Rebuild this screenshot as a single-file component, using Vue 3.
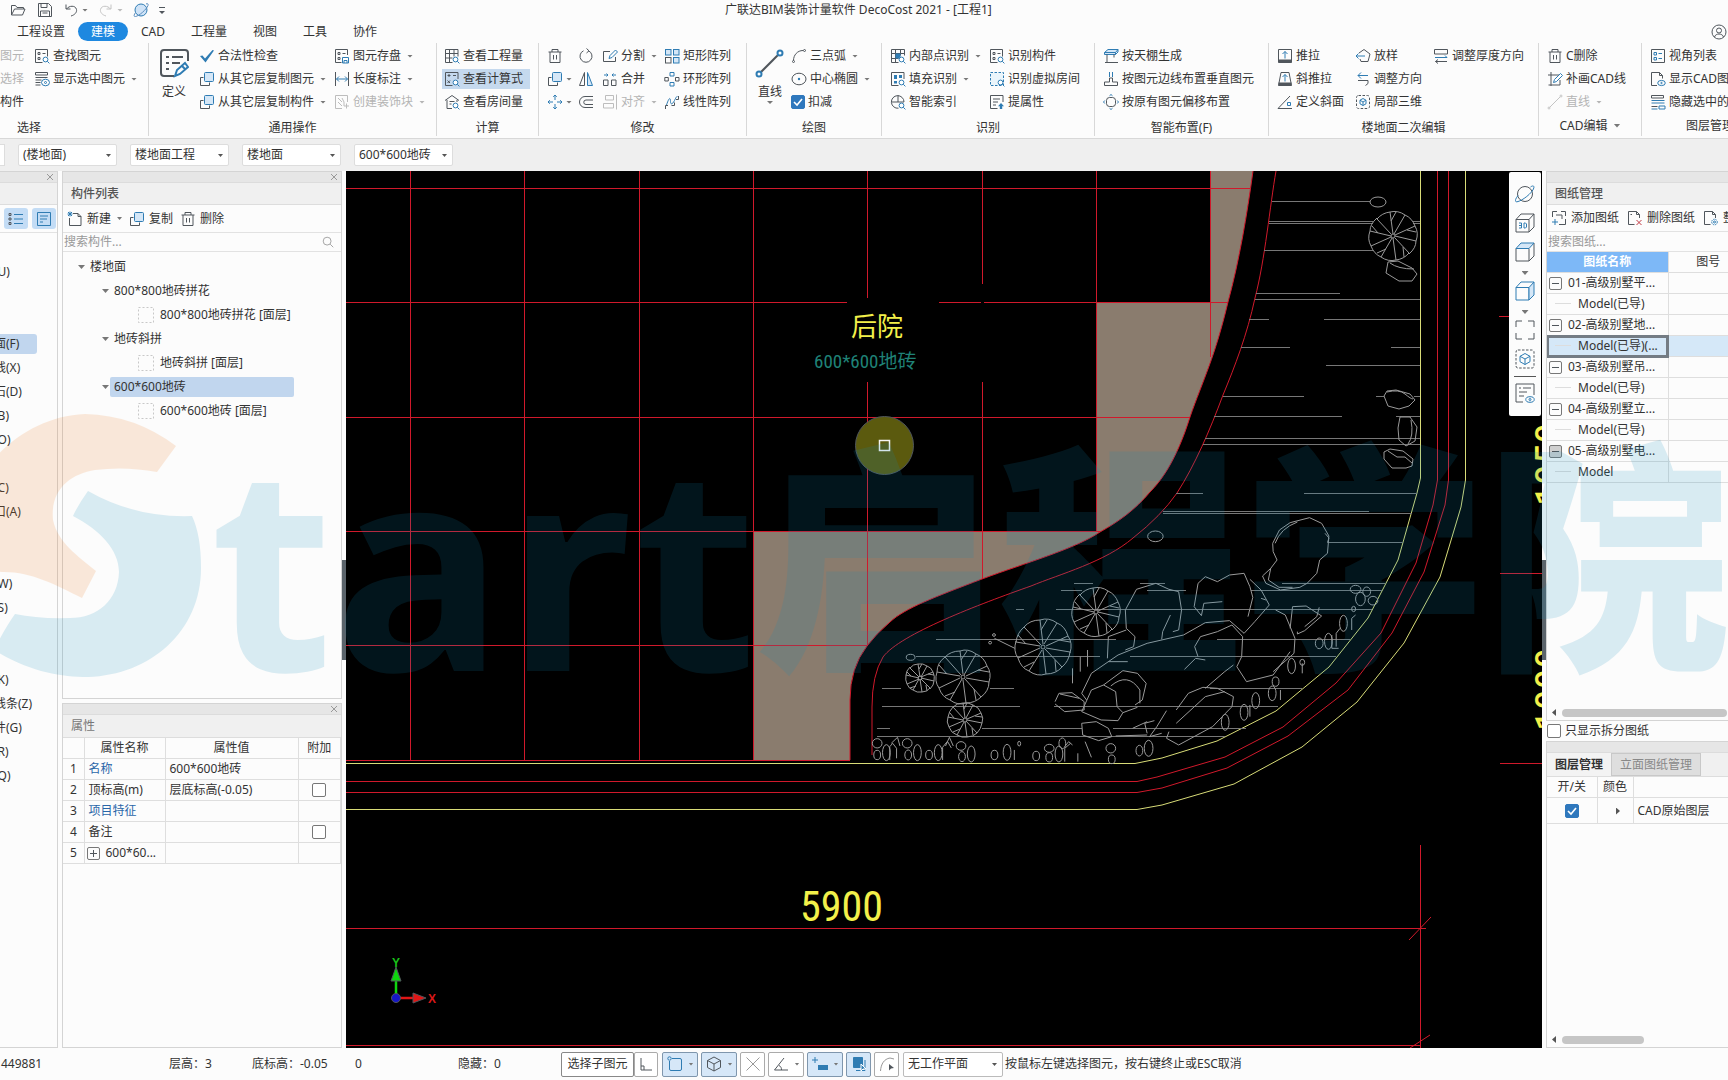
<script setup>
const D = '#50565c'
const B = '#2f7cb3'
const lens = `<g stroke="${B}" fill="#fff"><circle cx="11.5" cy="11.5" r="2.4"/><path d="M13.3 13.3 15.4 15.4"/></g>`
const icons = {
  folder: '<path d="M1.5 13V3.500h4l1.500 2h6.500V7M1.500 13 4.500 7H15l-2.500 6z"/>',
  save: '<path d="M1.500 1.500h10l3 3v10h-13zM4 1.500v4h6v-4M3.500 14V9h9v5M5.500 11h5"/>',
  undo: '<path d="M3 2.500v4.500h4.500M3.500 7C6 3.500 12.500 3 13.500 7.500c.6 3-2 5.500-5.500 6.500"/>',
  redo: '<path stroke="#c4c4c4" d="M13 2.500v4.500H8.500M12.500 7C10 3.500 3.500 3 2.500 7.500c-.6 3 2 5.500 5.500 6.500"/>',
  planet: `<g stroke="${B}"><circle cx="8" cy="8" r="6" fill="#cfe3f7"/><path d="M2.500 10.500C.5 13.500.8 14.800 2.500 14.500 6 14 13.500 7.500 15 3.500 15.500 1.800 14.500 1.200 13 2" stroke="#5d8fc0"/></g>`,
  more: '<path d="M5 5.500h6"/><path d="M5 9h6l-3 3z" fill="#50565c" stroke="none"/>',
  find: `<path d="M1.500 1.500h12v7M1.500 1.500v13h7M4 4.500h2v2H4zM4 9.500h2v2H4zM8.500 5.500h3"/>${lens}`,
  layersEye: `<g stroke="${D}"><path d="M1.500 1.500h12v2.500h-12zM1.500 6.500h12M1.500 9h6M1.500 11.500h5M1.500 14h5"/></g><g stroke="${B}"><ellipse cx="11.500" cy="11.500" rx="4" ry="3.300" fill="#fff"/><circle cx="11.500" cy="11.500" r="1"/></g>`,
  check: `<path d="M1 8 3.500 7.500 6 10.500 13.500 2 15 2.500 6.500 14.500z" fill="${B}" stroke="none"/>`,
  copy: `<path d="M4.500 6.500h-3v8h9v-3" /><rect x="5.500" y="1.500" width="9" height="9" rx="1" fill="#d5e7f7" stroke="${B}"/>`,
  saveEl: `<path d="M13.500 7V1.500h-12v13h6M4 4.500h2v2H4zM4 9.500h2v2H4zM8.500 5.500h3"/><path stroke="${B}" fill="#fff" d="M8.500 9.500h6v5.500h-6zM10 15v-2.500h3V15"/>`,
  length: `<path d="M1.500 1v14M14.500 1v14"/><path stroke="${B}" d="M2.500 8h11M5 5.500 2.500 8 5 10.500M11 5.500 13.500 8 11 10.500"/>`,
  block: '<g stroke="#bdbdbd"><path d="M8 14.500H1.500v-13h12V8M4 4l4 4M4 8l4 4M8 4l2 4v4M10 12h5M12.500 9.500v5"/></g>',
  grid: `<path d="M1.500 1.500h12.500v7M1.500 1.500v13h7M1.500 5.500H14M1.500 10h7M5.500 1.500v13M10 1.500v7"/>${lens}`,
  calc: `<path d="M14 8V1.500H1.500v13h7M3.500 4.500h3M5 3v3M9 4.500h3M3.500 9.500l2.500 2.500M6 9.500 3.500 12"/>${lens}`,
  house: `<path d="M3 6v8.500h5M1 6.500 8 1.500l7 5M13 6v2M5.500 7.500h5M5.500 10h2"/>${lens}`,
  trash: '<path d="M1.500 4h13M5 4V1.500h6V4M3 4v10.500h10V4M6.500 7v4.500M9.500 7v4.500"/>',
  rotate: '<path d="M10.500 2.800A6 6 0 1 1 5.500 2.800M8.500 .5l2.500 2.300L8.500 5"/>',
  split: `<path d="M8 3.500H1.500v10h12V9"/><path stroke="${B}" d="M7 10.500 8 7.500 13.500 2 15.500 4 10 9.500z"/>`,
  arrayRect: `<g fill="#d5e7f7"><rect x="1.500" y="1.500" width="5.500" height="5.500" stroke="${B}"/><rect x="9.500" y="1.500" width="5.500" height="5.500"  stroke="${B}"/><rect x="1.500" y="9.500" width="5.500" height="5.500" fill="none"/><rect x="9.500" y="9.500" width="5.500" height="5.500" stroke="${B}"/></g>`,
  mirror: `<path d="M6.500 1.500v13h-5z"/><path d="M9.500 1.500v13h5z" fill="#d5e7f7" stroke="${B}"/>`,
  merge: `<path d="M1.500 9h4.500v5.500H1.500zM9.500 9H14v5.500H9.500z"/><g stroke="${B}"><path d="M2 4h4M4.500 2.500 6 4 4.500 5.500M14 4h-4M11.500 2.500 10 4l1.500 1.500"/></g>`,
  arrayRing: `<g stroke="${B}"><path d="M6 1.500h4V5H6zM6 11.500h4V15H6z"/></g><path d="M.8 6.500h3.500V10H.8zM11.500 6.500H15V10h-3.500z"/>`,
  move: `<g stroke="${B}"><path d="M8 1v5M8 10v5M1 8h5M10 8h5M6.200 2.800 8 1l1.800 1.800M6.200 13.200 8 15l1.800-1.800M2.800 6.200 1 8l1.800 1.800M13.200 6.200 15 8l-1.800 1.800"/></g>`,
  offset: '<path d="M15 2.500H7a5.500 5.500 0 0 0 0 11h8M15 6H8a2 2 0 0 0 0 4.500h7"/>',
  align: '<g stroke="#bdbdbd"><path d="M3.500 1.500h8V6h-8zM1.500 9.500h10V14h-10zM14.500 .5v15"/></g>',
  arrayLine: `<path stroke="${B}" d="M2.500 11c3-9 4-7 4-3.500s2 3 4-1 2-4 3-4"/><path d="M1.500 15v-3.500H4M12 5.500h2.500V2M7.500 11.500h3v-3"/>`,
  arc: `<path d="M2.500 12.500C2.500 7 6.500 2.500 12 2.500"/><circle cx="2.500" cy="13.500" r="1"/><circle cx="13.500" cy="2.500" r="1"/>`,
  ellipse: `<ellipse cx="8" cy="8" rx="7" ry="5.800"/><circle cx="8" cy="8" r="1.200" fill="${B}" stroke="none"/>`,
  inner: `<path d="M1.500 1.500h13v6M1.500 1.500v13h7M1.500 5.500h13M1.500 10.500h7M5.500 1.500v13M10.500 1.500v6"/><rect x="5.500" y="5.500" width="5" height="5" fill="${B}" stroke="none"/>${lens}`,
  fill: `<path d="M14 8V1.500H1.500v13h7"/><path fill="${B}" stroke="none" d="M4 4h3v4H4zM9 4h3v3H9zM4 10h3v2.500H4z"/>${lens}`,
  index: `<path d="M14 8A6.300 6.300 0 1 0 8.500 14.200M8 1v7H1.500M8 8h6"/>${lens}`,
  virtual: `<rect x="1.500" y="1.500" width="13" height="13" stroke="${B}" stroke-dasharray="2.500 1.500" fill="#eaf5fb"/>${lens}`,
  lift: `<path d="M14 8V1.500H1.500v13h7M4 5h7M4 8h5M4 11h3"/><path fill="${B}" stroke="none" d="m12 9 3 3.200h-1.800V15h-2.400v-2.800H9z"/>`,
  ceiling: `<path stroke="${B}" fill="#d5e7f7" d="M1.500 4.500 5 1.500h10l-2.500 3zM1.500 4.500v2h11v-2M12.500 6.500 15 4V1.500"/><path d="M4 6.500v8M2 14.500h13M11 6.500v3"/>`,
  edge: `<path d="M1.500 14.500v-3.500h5V7h3v4h5v3.500z"/><path stroke="${B}" d="M6.500 1v5M9.500 1v5"/>`,
  offsetAll: `<rect x="3.500" y="3.500" width="9" height="9" rx="3"/><g stroke="${B}"><path d="M6.500 1.800 8 .5l1.500 1.300M6.500 14.200 8 15.500l1.500-1.300M1.800 6.500.5 8l1.300 1.500M14.200 6.500 15.500 8l-1.300 1.500"/></g>`,
  push: `<path d="M1.500 1.500h13v13h-13z"/><path d="M1.500 13h13" stroke-width="3"/><path stroke="${B}" d="M8 10.500v-7M5.500 6 8 3.500 10.500 6"/>`,
  pushSlant: `<path d="M4 1.500h8l2.500 13h-13z"/><path d="M1.500 13h13" stroke-width="3"/><path stroke="${B}" d="M8 10.500v-7M5.500 6 8 3.500 10.500 6"/>`,
  slope: `<path d="M1 14.500h14M1 14.500 13 2"/><path stroke="${B}" d="M10.500 8.500h3v3h-3z"/>`,
  loft: `<path d="M4 5 9 1.500l6 4.500-2 7.500H6L5 11"/><path stroke="${B}" d="M10 8H1M3.500 5.500 1 8l2.500 2.500"/>`,
  swap: `<path stroke="${B}" d="M13 4.500H3M6 1.500l-3 3 3 3"/><path d="M3 9.500h10v3M3 9.500M13 12.500l-2.500 2"/>`,
  local3d: `<rect x="1.500" y="1.500" width="13" height="13" rx="2" stroke-dasharray="2.500 1.500"/><path stroke="${B}" d="M8 4.500 11 6.200v3.600L8 11.500 5 9.800V6.200zM5 6.200 8 8l3-1.800M8 8v3.500"/>`,
  thick: `<path d="M1.500 1.500h13v4.500h-13z"/><path stroke="${B}" d="M2 9.500h12l-2-2"/><path d="M14 13.500H2.500l2.500-2M2.500 13.500 5 15.500"/>`,
  addLine: `<path d="M4 1v14M1 4h12M13 9v5H1.500"/><path stroke="${B}" fill="#fff" d="M6.500 11.500 7.500 8.500 13.500 2.500 15.500 4.500 9.500 10.500z"/>`,
  lineOff: '<g stroke="#c4c4c4"><path d="M2.500 13.500 13 3"/><circle cx="2" cy="14" r="1"/><circle cx="14" cy="2" r="1"/></g>',
  viewList: `<path d="M1.500 1.500h13v13h-13z"/><path stroke="${B}" d="M4 4.500h2.500V7H4zM4 9.500h2.500V12H4zM8.500 5.500H12M8.500 10.500H12"/>`,
  cadEye: `<path d="M7 14.500H1.500v-13h8l3 3v3M9.500 1.500v3h3"/><g stroke="${B}"><ellipse cx="11.500" cy="12" rx="3.800" ry="2.600"/><circle cx="11.500" cy="12" r=".7"/></g>`,
  hide: `<path d="M1.500 1.500h12v2.500h-12zM1.500 12.500h6"/><g stroke="${B}"><path d="M1.500 6.500h13M1.500 9h13M1.500 15h6M9 12h6v3H9z"/></g>`,
  newDoc: `<path d="M6 2.500h5l3 3v9H2.500V7M11 2.500v3h3"/><path stroke="${B}" d="M1 1l4 4M5 1 1 5M3 .5v5M.5 3h5"/>`,
  docAdd: `<path d="M6 1.500H1.500V7M10 1.500h4.500V6M14.500 9v5.500H8M5 5h6v4"/><path stroke="${B}" d="M1 12h6M4 9v6"/>`,
  docDel: '<path d="M7.500 14.500h-6v-13h8l3 3V8M5 4.500H3.500M9.500 1.500v3h3"/><path stroke="#c23b44" d="m9.500 10 5 5M14.500 10l-5 5"/>',
  docSet: `<path d="M7.500 14.500h-6v-13h8l3 3V8M9.500 1.500v3h3"/><g stroke="${B}"><circle cx="11.500" cy="12" r="2.800" stroke-dasharray="1.500 .8"/><circle cx="11.500" cy="12" r="1"/></g>`,
  list: `<g stroke="${B}"><path d="M6 3.500h9M6 8h9M6 12.500h9"/><path stroke="${D}" d="M1 2.500h2v2H1zM1 7h2v2H1zM1 11.500h2v2H1z"/></g>`,
  card: `<g stroke="${B}"><path d="M1.500 1.500h13v13h-13zM4 5h8M4 8h7M4 11h3"/></g>`,
  search: '<g stroke="#999"><circle cx="7" cy="7" r="4.500"/><path d="m10.500 10.500 3.500 3.500"/></g>',
  dash: '<rect x=".5" y=".5" width="15" height="15" stroke="#c8c8c8" stroke-dasharray="2 2"/>',
  orbit: `<circle cx="10" cy="10" r="7.500"/><path stroke="${B}" d="M3 11.500C-.5 16 0 18 2 17.800 7 17 17.500 9 18.800 4 19.500 1.500 17.500 1.500 15.500 3"/>`,
  cube3d: `<path d="M1 6.500h13V19H1zM1 6.500 6 1h13v13l-5 5M14 6.500 19 1"/><path stroke="${B}" d="M4 10h2.500v5H4M4 12.500h2.500M9 10v5h1.500l1-1v-3l-1-1z"/>`,
  cubeTop: `<path d="M1 6.500V19h13l5-5V1M14 6.500V19"/><path stroke="${B}" fill="#d5e7f7" d="M1 6.500 6 1h13l-5 5.500z"/>`,
  cubeSide: `<path stroke="${B}" d="M1 6.500h13V19H1zM1 6.500 6 1h13"/><path stroke="${B}" fill="#d5e7f7" d="M14 6.500 19 1v13l-5 5z"/>`,
  frame: '<path d="M1 7V1h6M13 1h6v6M19 13v6h-6M7 19H1v-6"/>',
  frame3d: `<rect x="1" y="1" width="18" height="18" rx="2" stroke-dasharray="2.500 1.500"/><path stroke="${B}" d="m10 4.500 5 2.800v5.400l-5 2.800-5-2.800V7.300zM5 7.300l5 2.700 5-2.700M10 10v5.500"/>`,
  noteEye: `<path d="M8 19H1V1h18v11M4 5h2M8 5h8M4 9h8M4 13h5"/><g stroke="${B}"><ellipse cx="15" cy="16.500" rx="4.200" ry="2.800"/><circle cx="15" cy="16.500" r="1"/></g>`,
  user: '<circle cx="8" cy="8" r="7"/><circle cx="8" cy="6.500" r="2.500"/><path d="M3.500 13c1-4 8-4 9 0"/>',
  ortho: '<path d="M3 2v12h11M3 10h3v4"/>',
  snap: `<g stroke="${B}"><path d="M5 2.500h8a1.500 1.500 0 0 1 1.500 1.500v9a1.500 1.500 0 0 1-1.500 1.500H4A1.500 1.500 0 0 1 2.500 13V5"/><circle cx="2.500" cy="2.500" r="1.700"/></g>`,
  cube: '<path d="m8 1 6.500 3.500v7L8 15l-6.500-3.500v-7zM1.500 4.500 8 8l6.500-3.500M8 8v7"/>',
  cross: '<path stroke="#999" d="m1.500 1.500 13 13M14.500 1.500l-13 13"/>',
  angle: '<path d="M11 2 1.500 14H15M6 9.500c2 1 2.500 2.500 2.500 4.500"/>',
  dyn: `<path stroke="${B}" d="M0 4h6M3 1v6"/><path fill="${B}" stroke="none" d="M6 9h10v5H6z"/>`,
  pick: `<path fill="${B}" stroke="${B}" d="M2.500 1.500h9v10h-9z"/><path stroke="${B}" d="M5 14.500h9V4"/><path fill="${B}" stroke="#fff" d="m10 8 5 5h-3l-2 2z"/>`,
  poly: `<path stroke="#999" d="M1.500 15C2 8 5 3 11 2l4 1"/><path fill="${D}" stroke="none" d="m10 8 5 4-3 .5-2 2z"/>`,
}
const it = (i, t, caret, off) => ({ i, t, caret, off })
const groups = [
  { w: 149, label: '选择', lp: 17, pad: 0, cols: [
    { w: 34, items: [it(null, '图元', 0, 1), it(null, '选择', 0, 1), it(null, '构件')] },
    { items: [it('find', '查找图元'), it('layersEye', '显示选中图元', 1)] }] },
  { w: 288, label: '通用操作', pad: 10, big: 'define', cols: [
    { w: 135, items: [it('check', '合法性检查'), it('copy', '从其它层复制图元', 1), it('copy', '从其它层复制构件', 1)] },
    { items: [it('saveEl', '图元存盘', 1), it('length', '长度标注', 1), it('block', '创建装饰块', 1, 1)] }] },
  { w: 102, label: '计算', pad: 7, cols: [
    { items: [it('grid', '查看工程量'), { ...it('calc', '查看计算式'), on: true }, it('house', '查看房间量')] }] },
  { w: 208, label: '修改', pad: 8, cols: [
    { w: 31, items: [it('trash'), it('copy', '', 1), it('move', '', 1)] },
    { w: 24, items: [it('rotate'), it('mirror'), it('offset')] },
    { w: 62, items: [it('split', '分割', 1), it('merge', '合并'), it('align', '对齐', 1, 1)] },
    { items: [it('arrayRect', '矩形阵列'), it('arrayRing', '环形阵列'), it('arrayLine', '线性阵列')] }] },
  { w: 135, label: '绘图', pad: 8, big: 'line', cols: [
    { items: [it('arc', '三点弧', 1), it('ellipse', '中心椭圆', 1), { t: '扣减', box: true }] }] },
  { w: 213, label: '识别', pad: 8, cols: [
    { w: 99, items: [it('inner', '内部点识别', 1), it('fill', '填充识别', 1), it('index', '智能索引')] },
    { items: [it('find', '识别构件'), it('virtual', '识别虚拟房间'), it('lift', '提属性')] }] },
  { w: 174, label: '智能布置(F)', pad: 8, cols: [
    { items: [it('ceiling', '按天棚生成'), it('edge', '按图元边线布置垂直图元'), it('offsetAll', '按原有图元偏移布置')] }] },
  { w: 270, label: '楼地面二次编辑', pad: 8, cols: [
    { w: 78, items: [it('push', '推拉'), it('pushSlant', '斜推拉'), it('slope', '定义斜面')] },
    { w: 78, items: [it('loft', '放样'), it('swap', '调整方向'), it('local3d', '局部三维')] },
    { items: [it('thick', '调整厚度方向')] }] },
  { w: 103, label: 'CAD编辑', lcaret: true, pad: 8, cols: [
    { items: [it('trash', 'C删除'), it('addLine', '补画CAD线'), it('lineOff', '直线', 1, 1)] }] },
  { w: 140, label: '图层管理', lp: 44, lup: true, pad: 8, cols: [
    { items: [it('viewList', '视角列表'), it('cadEye', '显示CAD图'), it('hide', '隐藏选中的')] }] },
]
const tabs = ['工程设置', '建模', 'CAD', '工程量', '视图', '工具', '协作']
const combos = ['(楼地面)', '楼地面工程', '楼地面', '600*600地砖']
const kinds = ['(U)', '', '', '面(F)', '线(X)', '石(D)', '(B)', '(O)', '', '(C)', '口(A)', '', '', '(W)', '(S)', '', '', '(K)', '线条(Z)', '件(G)', '(R)', '(Q)']
const tree = [
  { l: 0, t: '楼地面' }, { l: 1, t: '800*800地砖拼花' }, { l: 2, t: '800*800地砖拼花 [面层]' },
  { l: 1, t: '地砖斜拼' }, { l: 2, t: '地砖斜拼 [面层]' },
  { l: 1, t: '600*600地砖', on: true }, { l: 2, t: '600*600地砖 [面层]' },
]
const props = [
  { n: '名称', v: '600*600地砖', link: true }, { n: '顶标高(m)', v: '层底标高(-0.05)', box: true },
  { n: '项目特征', v: '', link: true }, { n: '备注', v: '', box: true }, { n: '600*60...', v: '', plus: true },
]
const sheets = [
  { t: '01-高级别墅平...', p: 1 }, { t: 'Model(已导)' }, { t: '02-高级别墅地...', p: 1 }, { t: 'Model(已导)(...', on: true },
  { t: '03-高级别墅吊...', p: 1 }, { t: 'Model(已导)' }, { t: '04-高级别墅立...', p: 1 }, { t: 'Model(已导)' },
  { t: '05-高级别墅电...', p: 1, grey: true }, { t: 'Model' },
]
const status = [
  { i: 'ortho', w: 24, g: 0 }, { i: 'snap', w: 36, g: 4, on: 1, c: 1 }, { i: 'cube', w: 36, g: 3, on: 1, c: 1 }, { i: 'cross', w: 25, g: 3 },
  { i: 'angle', w: 36, g: 3, c: 1 }, { i: 'dyn', w: 36, g: 3, on: 1, c: 1 }, { i: 'pick', w: 25, g: 3, on: 1 }, { i: 'poly', w: 25, g: 3 },
]
const views = ['orbit', 'cube3d', 'cubeTop', 'v', 'cubeSide', 'v', 'frame', 'frame3d', '-', 'noteEye']

const vLines = [410, 524, 639, 753, 867, 982, 1096, 1210]
const water = [
  [1272, 1370, 201], [1269, 1373, 221], [1269, 1373, 223], [1413, 1420, 221], [1413, 1420, 223], [1264, 1373, 250], [1256, 1340, 293],
  [1255, 1420, 299], [1249, 1269, 319], [1324, 1420, 319], [1241, 1290, 347], [1391, 1420, 347], [1326, 1420, 365], [1223, 1304, 396],
  [1376, 1384, 396], [1414, 1420, 396], [1214, 1342, 416], [1396, 1420, 416], [1205, 1420, 438], [1203, 1420, 444], [1176, 1203, 493],
  [1304, 1417, 493], [1163, 1369, 511], [1163, 1412, 513], [1328, 1403, 542], [1074, 1093, 583], [1140, 1165, 583], [1282, 1385, 583],
  [1061, 1082, 590], [1147, 1186, 590], [1251, 1382, 590], [1016, 1024, 609], [1056, 1372, 609], [936, 1116, 639], [1217, 1350, 639],
  [916, 1100, 656], [1130, 1336, 656], [882, 901, 688], [990, 1014, 688], [1210, 1302, 688], [882, 1020, 706], [1054, 1278, 706],
  [877, 890, 728], [982, 1082, 728], [1113, 1246, 728], [877, 1225, 736],
]
const plants = [[1393, 236, 25], [1096, 612, 25], [1043, 647, 29], [963, 677, 28], [920, 678, 15], [965, 720, 18]]
const petals = (cx, cy, r) => {
  const pt = (a, k) => `${Math.round(cx + Math.cos(a) * r * k)} ${Math.round(cy + Math.sin(a) * r * k)}`
  let d = ''
  for (let n = 0; n < 10; n++) {
    const a = n * Math.PI / 5 + 0.2
    d += `M${pt(a, 0.1)}L${pt(a, 0.95)}`
    if (n % 2) d += `M${pt(a, 0.6)}L${pt(a + 0.25, 0.95)}`
    d += `M${pt(a, 0.95)}Q${pt(a + 0.3, 1.04)} ${pt(a + 0.63, 0.95)}`
  }
  return d
}
const pebbles = [
  [283, 730, 10, 14], [283, 765, 7, 14], [302, 758, 8, 24], [345, 730, 10, 14], [347, 765, 7, 15], [366, 758, 8, 24], [390, 765, 7, 14],
  [409, 758, 8, 24], [456, 738, 10, 13], [458, 770, 7, 15], [477, 762, 8, 24], [525, 765, 7, 14], [551, 757, 8, 24], [611, 768, 7, 14],
  [638, 745, 10, 12], [638, 772, 7, 14], [658, 762, 8, 24], [665, 730, 7, 16], [765, 745, 10, 14], [767, 778, 7, 13], [824, 752, 7, 16],
  [843, 745, 9, 24], [1001, 667, 8, 24], [1040, 637, 8, 24], [1064, 602, 8, 24], [1098, 580, 8, 22], [1105, 545, 7, 14],
  [1138, 498, 8, 23], [1195, 430, 8, 16], [1214, 424, 8, 24], [1245, 370, 8, 24], [1270, 268, 11, 12], [1293, 275, 8, 14],
  [1280, 297, 10, 20], [1306, 302, 10, 13], [1266, 327, 4, 8], [1160, 487, 5, 9], [576, 731, 3, 7], [352, 472, 9, 9], [524, 405, 3, 4], [516, 428, 3, 4],
  [857, 109, 16, 16],
]
</script>

<template>
  <div class="app">
    <header class="title">
      <nav class="quick">
        <button aria-label="打开"><svg viewBox="0 0 16 16" v-html="icons.folder" /></button>
        <button aria-label="保存" class="q2"><svg viewBox="0 0 16 16" v-html="icons.save" /></button>
        <button aria-label="撤销" class="q3"><svg viewBox="0 0 16 16" v-html="icons.undo" /><i class="caret" /></button>
        <button aria-label="恢复" class="q3"><svg viewBox="0 0 16 16" v-html="icons.redo" /><i class="caret pale" /></button>
        <button aria-label="视图" class="q3"><svg viewBox="0 0 16 16" v-html="icons.planet" /></button>
        <button aria-label="更多" class="q4"><svg viewBox="0 0 16 16" v-html="icons.more" /></button>
      </nav>
      <h1>广联达BIM装饰计量软件 DecoCost 2021 - [工程1]</h1>
    </header>
    <nav class="tabs">
      <button v-for="t in tabs" :key="t" :class="{ on: t === '建模' }">{{ t }}</button>
      <button class="user" aria-label="用户"><svg viewBox="0 0 16 16" v-html="icons.user" /></button>
    </nav>

    <section class="ribbon">
      <div v-for="g in groups" :key="g.label" class="group" :style="{ width: g.w + 'px' }">
        <div class="tools" :style="{ paddingLeft: g.pad + 'px' }">
          <button v-if="g.big === 'define'" class="big">
            <svg viewBox="0 0 30 30"><path d="M15 28H5a3 3 0 0 1-3-3V5a3 3 0 0 1 3-3h21a3 3 0 0 1 3 3v8M7 9h3M13 9h11M7 15h3M13 15h8M7 21h3" stroke-width="2" /><path d="m16 28 2-6 8-7 3 4-8 7zM23 18l3 3" stroke="#2f7cb3" stroke-width="2" /></svg>
            <span>定义</span>
          </button>
          <button v-if="g.big === 'line'" class="big short">
            <svg viewBox="0 0 30 30"><path d="M4 26 25 5" stroke-width="2" /><g stroke="#2f7cb3" stroke-width="2" fill="#fff"><circle cx="4" cy="26" r="2.500" /><circle cx="25" cy="5" r="2.500" /></g></svg>
            <span>直线</span><i class="caret" />
          </button>
          <div v-for="(c, ci) in g.cols" :key="ci" class="col" :style="c.w ? { width: c.w + 'px' } : {}">
            <template v-for="x in c.items" :key="x.i + x.t">
              <label v-if="x.box" class="tool"><input type="checkbox" checked><span>{{ x.t }}</span></label>
              <button v-else class="tool" :class="{ off: x.off, on: x.on }" :aria-label="x.t || x.i">
                <svg v-if="x.i" viewBox="0 0 16 16" v-html="icons[x.i]" />
                <span v-if="x.t">{{ x.t }}</span><i v-if="x.caret" class="caret" :class="{ tight: !x.t }" />
              </button>
            </template>
          </div>
        </div>
        <div class="glabel" :class="{ left: g.lp, up: g.lcaret || g.lup }" :style="g.lp ? { paddingLeft: g.lp + 'px' } : {}">{{ g.label }}<i v-if="g.lcaret" class="caret wide" /></div>
      </div>
    </section>

    <section class="options">
      <span class="stub" />
      <select v-for="c in combos" :key="c" :aria-label="c"><option>{{ c }}</option></select>
    </section>

    <main class="work">
      <aside class="panel kinds">
        <div class="grip"><button class="x" aria-label="关闭"><svg viewBox="0 0 8 8"><path d="m1 1 6 6M7 1 1 7" stroke="#999" /></svg></button></div>
        <div class="ptitle" />
        <div class="pbar toggles">
          <button aria-label="列表"><svg viewBox="0 0 16 16" v-html="icons.list" /></button>
          <button aria-label="卡片"><svg viewBox="0 0 16 16" v-html="icons.card" /></button>
        </div>
        <ul><li v-for="(k, n) in kinds" :key="n" :class="{ on: k === '面(F)' }"><span>{{ k }}</span></li></ul>
      </aside>

      <div class="stack">
        <aside class="panel parts">
          <div class="grip"><button class="x" aria-label="关闭"><svg viewBox="0 0 8 8"><path d="m1 1 6 6M7 1 1 7" stroke="#999" /></svg></button></div>
          <h2 class="ptitle">构件列表</h2>
          <div class="pbar">
            <button><svg viewBox="0 0 16 16" v-html="icons.newDoc" />新建<i class="caret sm" /></button>
            <button><svg viewBox="0 0 16 16" v-html="icons.copy" />复制</button>
            <button><svg viewBox="0 0 16 16" v-html="icons.trash" />删除</button>
          </div>
          <div class="find"><input type="text" placeholder="搜索构件..." aria-label="搜索构件"><svg viewBox="0 0 16 16" v-html="icons.search" /></div>
          <ul class="tree">
            <li v-for="r in tree" :key="r.t" :class="['l' + r.l, { on: r.on }]">
              <i v-if="r.l < 2" class="caret wide" /><svg v-else viewBox="0 0 16 16" v-html="icons.dash" /><span>{{ r.t }}</span>
            </li>
          </ul>
        </aside>
        <aside class="panel props">
          <div class="grip"><button class="x" aria-label="关闭"><svg viewBox="0 0 8 8"><path d="m1 1 6 6M7 1 1 7" stroke="#999" /></svg></button></div>
          <h2 class="ptitle thin">属性</h2>
          <table>
            <colgroup><col class="c1"><col class="c2"><col class="c3"><col></colgroup>
            <thead><tr><th /><th>属性名称</th><th>属性值</th><th>附加</th></tr></thead>
            <tbody>
              <tr v-for="(p, n) in props" :key="n">
                <td class="num">{{ n + 1 }}</td>
                <td :class="{ link: p.link }"><button v-if="p.plus" class="pm" aria-label="展开"><svg viewBox="0 0 9 9"><path d="M1 4.500h7M4.500 1v7" /></svg></button>{{ p.n }}</td>
                <td>{{ p.v }}</td>
                <td class="mid"><input v-if="p.box" type="checkbox" :aria-label="p.n"></td>
              </tr>
            </tbody>
          </table>
        </aside>
      </div>
      <div class="split"><button aria-label="折叠" /></div>

      <section class="canvas">
        <svg class="draw" viewBox="346 171 1196 877" preserveAspectRatio="xMidYMid slice">
          <path class="tile" d="M1211 171H1253C1247 215 1239 262 1228 302C1215 357 1203 380 1190 417C1176 462 1160 482 1150 492C1135 510 1118 522 1100 532C1075 549 1025 563 982 579C935 597 905 608 890 622Q876 634 867 646Q850 668 850 700V760H753V531H1097V303H1211Z" />
          <g class="red">
            <path v-for="x in vLines" :key="x" :d="`M${x + 0.5} 171V${x > 1200 ? 357 : x > 1090 ? 532 : x > 960 ? 579 : x > 860 ? 646 : 760}`" />
            <path d="M346 188.500H1250M346 302.500H1228M346 417.500H1190M346 531.500H1100M346 645.500H867M346 760.500H850" />
            <path d="M1253 171C1247 215 1239 262 1228 302C1215 357 1203 380 1190 417C1176 462 1160 482 1150 492C1135 510 1118 522 1100 532C1075 549 1025 563 982 579C935 597 905 608 890 622Q876 634 867 646Q850 668 850 700V760" />
            <path d="M1276 171C1270 205 1265 260 1255 298C1247 335 1235 366 1223 395C1210 430 1195 465 1177 493Q1161 516 1133 538C1105 562 1060 574 1031 586C980 604 900 634 883 657Q872 675 872 707V755" />
            <path d="M1437.500 171V480L1433 505L1416 563L1381 633L1336 683L1283 727L1225 757L1157 777L1137 781.500H346" />
            <path d="M1448.500 171V480L1445 505L1424 572L1392 633L1348 690L1288 736L1227 768L1162 788L1137 792.500H346" />
            <path d="M346 928.500H1426M1420.500 845V1048M1409 940L1431 917M346 1045.500H1420M1410 1048L1430 1035M1499 316.500H1512M1500 573.500H1542M1500 763.500H1542" />
          </g>
          <path class="gap" d="M847 302.500H939M867.500 298V382M982.500 284V382" />
          <g class="yellow">
            <path d="M1420.500 171V478L1417 493L1398 560L1368 618L1329 667L1276 711L1217 741L1162 758L1135 763.500H346" />
            <path d="M1465.500 171V480L1461 507L1440 577L1404 643L1357 702L1302 747L1234 784L1162 805L1137 809.500H346" />
          </g>
          <g class="grey">
            <path v-for="(w, n) in water" :key="n" :d="`M${w[0]} ${w[2] + 0.5}H${w[1]}`" class="water" />
            <g v-for="(p, n) in plants" :key="n"><path :d="petals(...p)" /><circle :cx="p[0]" :cy="p[1]" r="2" /></g>
            <ellipse cx="1378" cy="202" rx="8" ry="5" />
            <path d="M1388 262l-2 11 13 8h13l5-7-5-6-14-7zM1390 263q8 6 24 6" />
            <path d="M1384 396l3-5 9-1 14 4 5 6-6 6-10 3-11-3zM1387 392q12-3 18 2t8 5M1400 417h10l7 10-2 14-9 5-7-6-1-12zM1411 420q3 16-3 24M1384 452l6-3 13 2 10 8-1 7-6 2h-14l-8-9zM1388 451l9 6h8l7 6" />
            <g transform="translate(740 500) scale(.4847 .3333)">
              <ellipse v-for="(p, n) in pebbles" :key="n" :cx="p[0]" :cy="p[1]" :rx="p[2]" :ry="p[3]" />
              <path d="M1115 270 1085 250 1078 228 1095 205 1108 180 1100 155 1099 130 1113 90 1135 68 1175 53 1200 70 1215 108 1212 160 1196 180 1190 220 1170 250 1155 262 1115 270M1095 205 1090 240 1112 262 1140 262M1104 130Q1115 85 1150 66M1207 100l8 14-3 14" />
              <path d="M937 320 945 250 960 230 985 245 1010 225 1040 220 1052 260 1058 292 1048 350M1052 238 1075 270 1092 315 1062 365 1040 400M937 320 952 347 957 310 995 305M1075 295 1085 300" />
              <path d="M797 385 795 330 818 268 858 250 885 268 905 275 911 330 905 390 893 395M870 418 872 395 888 345M797 385 815 410 812 440 795 450M760 485 800 485M758 475 760 410 797 390" />
              <path d="M945 470 938 440 950 410 985 395 1015 375 1037 410 1035 470 1025 500 1045 545 1100 525 1135 455M715 600 705 580 725 520 780 465 840 430 915 405 960 368 1010 362 1040 400M1105 330 1125 345 1145 415 1143 460 1100 515M917 508 940 475 960 480M960 565 1000 515 1018 495" />
              <path d="M1135 385 1140 320 1168 318 1200 348 1165 392 1150 402 1150 395M1195 322 1190 350 1165 380" />
              <path d="M650 605 658 580 685 578 710 605 710 630 670 635 650 612M660 582 700 595M705 635 725 570 750 555 775 575 778 620 790 638M750 555 790 512 820 520 838 550 830 600 815 615M765 558Q800 515 825 570L825 610M705 635 745 660 780 662 790 638 820 622" />
              <path d="M707 705 705 670 735 665 760 685 767 710 740 722 707 705M900 630 925 580 955 562 985 565 1018 590 1015 620 975 680 905 735 880 715 885 695M900 670 960 590 1000 575M840 700 835 670 855 662 M880 632 860 680 845 710 870 700M810 685 840 665M775 708 840 705" />
              <path d="M309 780v-40l6-10 8 15v30M418 780v-38l10-18 8 20M566 780v-30M670 785v-40l12-15M697 785v-25M712 725 725 772M312 730 325 712 330 738M424 738 432 712 440 738M670 740l8-15 8 10M1052 650v-35M1115 600v-30M1160 520v-30M1230 440v-40l8-15M1262 390v-35l8-10M525 415 567 445M686 505v45M702 470v45M717 450v50M1235 445h-14v-40" />
            </g>
          </g>
          <text x="851" y="336" class="cjk y" font-size="26">后院</text>
          <text x="814" y="368" class="cad t" font-size="19">600*600地砖</text>
          <text x="800" y="921" class="cad y" font-size="42">5900</text>
          <text transform="translate(1565 506) rotate(-90)" class="cad y" font-size="42">1050</text>
          <text transform="translate(1565 731) rotate(-90)" class="cad y" font-size="42">1000</text>
          <circle cx="884.500" cy="445.500" r="29" fill="#5b5a0e" />
          <rect x="879.500" y="440.500" width="10" height="10" fill="none" stroke="#f4f4f4" stroke-width="1.500" />
          <path d="M396 998V978" stroke="#0ed60e" stroke-width="2.500" /><path d="m396 967 5 14h-10z" fill="#0ed60e" />
          <path d="M396 998h18" stroke="#e01616" stroke-width="2.500" /><path d="m426 998-13-5v10z" fill="#e01616" />
          <circle cx="396" cy="998" r="4.500" fill="#1616c8" />
          <text x="392" y="967" class="axis" fill="#18c018">Y</text>
          <text x="428" y="1003" class="axis" fill="#d81818">X</text>
        </svg>
        <div class="views">
          <template v-for="(v, n) in views" :key="n">
            <i v-if="v === 'v'" class="caret wide" /><hr v-else-if="v === '-'">
            <button v-else :aria-label="v"><svg viewBox="0 0 20 20" v-html="icons[v]" /></button>
          </template>
        </div>
      </section>
      <div class="split"><button aria-label="折叠" /></div>

      <div class="right">
        <aside class="panel sheets">
          <div class="grip" />
          <h2 class="ptitle">图纸管理</h2>
          <div class="pbar">
            <button><svg viewBox="0 0 16 16" v-html="icons.docAdd" />添加图纸</button>
            <button><svg viewBox="0 0 16 16" v-html="icons.docDel" />删除图纸</button>
            <button><svg viewBox="0 0 16 16" v-html="icons.docSet" />整</button>
          </div>
          <div class="find"><input type="text" placeholder="搜索图纸..." aria-label="搜索图纸"></div>
          <table>
            <colgroup><col class="s1"><col></colgroup>
            <thead><tr><th class="hot">图纸名称</th><th>图号</th></tr></thead>
            <tbody>
              <tr v-for="(s, n) in sheets" :key="n" :class="{ on: s.on }">
                <td><button v-if="s.p" class="pm" :class="{ grey: s.grey }" aria-label="折叠"><svg viewBox="0 0 9 9"><path d="M1 4.500h7" /></svg></button><i v-else class="twig" />{{ s.t }}</td><td />
              </tr>
            </tbody>
          </table>
          <div class="scroll"><i class="arrow" /><span class="long" /></div>
        </aside>
        <label class="only"><input type="checkbox">只显示拆分图纸</label>
        <aside class="panel layers">
          <div class="grip" />
          <div class="ltabs"><button class="on">图层管理</button><button>立面图纸管理</button></div>
          <table>
            <colgroup><col class="k1"><col class="k2"><col></colgroup>
            <thead><tr><th>开/关</th><th>颜色</th><th /></tr></thead>
            <tbody><tr><td class="mid"><input type="checkbox" checked aria-label="CAD原始图层"></td><td class="mid"><i class="arrow flip" /></td><td>CAD原始图层</td></tr></tbody>
          </table>
          <div class="scroll"><i class="arrow" /><span class="half" /></div>
        </aside>
      </div>
    </main>

    <footer class="status">
      <span class="s0">449881</span><span class="s2">层高：3</span><span class="s3">底标高：-0.05</span><span class="s4">0</span><span class="s5">隐藏：0</span>
      <button class="sub">选择子图元</button>
      <button v-for="s in status" :key="s.i" :aria-label="s.i" :class="{ on: s.on }" :style="{ width: s.w + 'px', marginLeft: s.g + 'px' }">
        <svg viewBox="0 0 16 16" v-html="icons[s.i]" /><i v-if="s.c" class="caret sm" />
      </button>
      <select aria-label="工作平面"><option>无工作平面</option></select>
      <span>按鼠标左键选择图元，按右键终止或ESC取消</span>
    </footer>

    <svg class="mark" viewBox="0 0 1728 1080" preserveAspectRatio="xMidYMid slice" aria-hidden="true">
      <path fill="#ee7719" d="M157 472L176 446Q135 415 85 414C38 416 0 445 -22 480V560Q-10 572 4 572C32 572 56 585 82 598L96 571C78 556 58 543 53 520C50 490 70 474 95 470Q125 466 157 472Z" />
      <path fill="#128dbb" d="M88 491Q78 505 73 516C100 530 119 550 119 572C118 600 98 618 70 618Q38 619 15 614Q5 628 -6 650C30 672 60 677 88 677C150 675 201 632 201 568Q201 535 192 516Q135 518 88 491Z" />
      <text x="210" y="671" class="wlat">tart</text>
      <text x="754" y="652" class="wcjk">启程学院</text>
    </svg>
  </div>
</template>

<style>
body { background: #fcfcfc; overflow: hidden; }
</style>
<style scoped>
.app { position: relative; display: flex; flex-direction: column; height: 100vh; overflow: hidden; background: #fcfcfc; color: #333; font: 12px/16px "Noto Sans", "Noto Sans CJK SC", sans-serif; }
button, input, select { font: inherit; color: inherit; }
button { display: inline-flex; align-items: center; padding: 0; border: 0; background: none; white-space: nowrap; }
svg { flex: none; width: 16px; height: 16px; fill: none; stroke: #50565c; }
h1, h2 { margin: 0; font-size: 12px; font-weight: 400; }
ul { margin: 0; padding: 0; list-style: none; }
.caret { flex: none; width: 6px; height: 3px; margin-left: 6px; background: #777; clip-path: polygon(0 0, 100% 0, 50% 100%); }
.caret.pale { background: #bbb; }
.caret.tight { margin-left: 0; }
.caret.sm { width: 5px; }
.caret.wide { width: 7px; height: 4px; }
.title { display: flex; flex: none; align-items: center; height: 20px; }
.quick { display: flex; flex: 0 0 715px; padding-left: 10px; }
.q2 { margin-left: 11px; }
.quick .caret { margin-left: 3px; }
.q3 { margin-left: 10px; }
.q4 { margin-left: 5px; }
.tabs { display: flex; flex: none; height: 23px; padding: 2px 0 2px 4px; box-sizing: border-box; }
.tabs button { padding: 0 13px; border-radius: 10px; }
.tabs .on { background: #1e88e0; color: #fff; }
.tabs .user { margin-left: auto; padding: 0 1px 0 0; }
.ribbon { display: flex; flex: none; box-sizing: border-box; height: 96px; border-bottom: 1px solid #d8d8d8; overflow: hidden; }
.group { display: flex; flex: none; flex-direction: column; box-sizing: border-box; height: 93px; border-right: 1px solid #d8d8d8; overflow: hidden; }
.tools { display: flex; flex: none; height: 70px; padding-top: 1px; box-sizing: border-box; }
.col { display: flex; flex: none; flex-direction: column; align-items: flex-start; gap: 3px; padding-top: 2px; }
.tool { display: flex; align-items: center; gap: 3px; height: 20px; white-space: nowrap; }
.tool .caret:not(.tight) { margin-left: 3px; }
.tool.off { color: #b4b4b4; }
.tool.off .caret { background: #b4b4b4; }
.tool.on { background: #c5d9ee; box-shadow: -2px 0 #c5d9ee, 7px 0 #c5d9ee; }
.big { flex-direction: column; width: 30px; margin-right: 10px; padding-top: 4px; height: 60px; }
.big svg { width: 30px; height: 30px; }
.big span { margin-top: 6px; }
.big .caret { margin: 1px 0 0; }
.short { margin-right: 6px; }
.glabel { display: flex; flex: none; align-items: center; justify-content: center; height: 23px; padding-top: 6px; box-sizing: border-box; line-height: 17px; }
.glabel.left { justify-content: flex-start; }
.glabel.up { padding-top: 2px; }
input[type=checkbox] { appearance: none; flex: none; width: 14px; height: 14px; margin: 0; border: 1px solid #777; border-radius: 2px; background: #fff; }
input[type=checkbox]:checked { border-color: #2f78bd; background: #2f78bd url("data:image/svg+xml,%3Csvg xmlns='http://www.w3.org/2000/svg' viewBox='0 0 12 12'%3E%3Cpath d='M2 6l3 3 5-6' fill='none' stroke='white' stroke-width='1.600'/%3E%3C/svg%3E"); }
.options { display: flex; flex: none; gap: 13px; box-sizing: border-box; height: 32px; padding: 5px 0; background: #efefef; }
.stub { width: 4px; height: 20px; border: 1px solid #ddd; border-left: 0; background: #fff; }
select { appearance: none; width: 99px; height: 22px; padding: 0 4px; border: 1px solid #ddd; border-radius: 2px; background: #fff url("data:image/svg+xml,%3Csvg xmlns='http://www.w3.org/2000/svg' width='5' height='3'%3E%3Cpath d='M0 0h5L2.500 3z' fill='%23555'/%3E%3C/svg%3E") no-repeat right 5px center; }
.work { display: flex; flex: 1; min-height: 0; }
.panel { display: flex; flex-direction: column; box-sizing: border-box; border: 1px solid #d4d4d4; background: #fcfcfc; overflow: hidden; }
.grip { display: flex; flex: none; align-items: center; justify-content: flex-end; height: 10px; background: #e6e6e6; border-bottom: 1px solid #dcdcdc; }
.x { margin-right: 3px; }
.x svg { width: 8px; height: 8px; }
.ptitle { flex: none; height: 21px; padding-left: 8px; border-bottom: 1px solid #ddd; background: #f0f0f0; color: #555; font-weight: 500; line-height: 21px; }
.ptitle.thin { height: 22px; color: #777; font-weight: 400; }
.pbar { display: flex; flex: none; align-items: center; gap: 7px; height: 27px; padding-left: 4px; border-bottom: 1px solid #e2e2e2; white-space: nowrap; }
.pbar button { gap: 4px; }
.pbar .caret { margin-left: 2px; }
.find { display: flex; flex: none; align-items: center; height: 18px; padding-right: 6px; border-bottom: 1px solid #e2e2e2; }
.find input { flex: 1; min-width: 0; height: 16px; padding: 0 1px; border: 0; outline: 0; background: none; }
.find input::placeholder { color: #999; opacity: 1; }
.find svg { width: 14px; height: 14px; }
.kinds { flex: none; width: 58px; border-left: 0; margin-right: 4px; }
.toggles { gap: 4px; }
.toggles button { justify-content: center; width: 24px; height: 21px; border-radius: 3px; background: #c3dcf5; }
.kinds ul { padding-top: 29px; }
.kinds li { height: 20px; margin: 0 20px 4px 0; border-radius: 0 3px 3px 0; line-height: 20px; white-space: nowrap; }
.kinds li span { margin-left: -6px; }
.kinds li.on, .tree .on span { background: #c1d6ee; }
.stack { display: flex; flex: none; flex-direction: column; gap: 4px; width: 280px; }
.parts { flex: 528 1 0; }
.props { flex: 345 1 0; }
.tree { padding-top: 3px; }
.tree li { display: flex; align-items: center; height: 24px; }
.tree .caret { margin: 0 1px 0 15px; }
.tree span { padding: 2px 4px; border-radius: 2px; }
.tree .l1 .caret { margin-left: 39px; }
.tree .l2 svg { margin-left: 75px; margin-right: 2px; }
.tree .on span { width: 176px; }
table { width: 100%; border-collapse: collapse; table-layout: fixed; }
th, td { height: 20px; padding: 0 4px; border: 1px solid #dedede; border-top: 0; font-weight: 400; line-height: 20px; text-align: left; white-space: nowrap; overflow: hidden; }
th { text-align: center; padding: 0; }
th:first-child, td:first-child { border-left: 0; }
.c1 { width: 21px; } .c2 { width: 81px; } .c3 { width: 133px; }
.num { padding: 0 7px; }
.link { color: #2a66a8; }
.mid { text-align: center; }
.mid input { display: inline-block; vertical-align: middle; }
.pm { justify-content: center; box-sizing: border-box; width: 13px; height: 13px; margin-right: 6px; border: 1px solid #777; border-radius: 2px; vertical-align: middle; }
.pm svg { width: 9px; height: 9px; }
.props .pm { margin-left: -2px; margin-right: 6px; }
.pm.grey { background: #d0d0d0; }
.split { display: flex; flex: none; align-items: flex-start; width: 4px; }
.split button { width: 4px; height: 100px; margin-top: 389px; background: #5b646b; }
.canvas { position: relative; flex: 1; min-width: 0; background: #000; overflow: hidden; }
.draw { display: block; width: 100%; height: 100%; }
.tile { fill: #8a7c6e; stroke: none; }
.red { stroke: #d0192b; }
.yellow { stroke: #d8dc78; }
.grey { stroke: #9a9a9a; }
.grey path, .grey ellipse { vector-effect: non-scaling-stroke; fill: none; }
.grey .water { stroke: #777; }
.gap { stroke: #000; stroke-width: 3; }
.draw text { stroke: none; }
.cad { font-family: "Roboto Condensed", "Liberation Sans Narrow", "Open Sans Condensed Light", "Open Sans Condensed", "Noto Sans CJK SC", sans-serif; font-weight: 400; }
.cjk { font-family: "Noto Sans CJK SC", sans-serif; }
.y { fill: #f2f04a; }
.t { fill: #1f8277; }
.axis { font: 700 12px "Liberation Sans", sans-serif; }
.views { position: absolute; top: 1px; right: 1px; display: flex; flex-direction: column; align-items: center; box-sizing: border-box; width: 32px; padding: 12px 0 4px; border-radius: 2px; background: #fcfcfc; }
.views button { margin-bottom: 9px; }
.views svg { width: 20px; height: 20px; }
.views .caret { margin: 0 0 6px; }
.views hr { width: 22px; height: 1px; margin: -2px 0 6px; border: 0; background: #555; }
.right { display: flex; flex: 0 0 182px; flex-direction: column; min-width: 0; overflow: hidden; }
.right .panel { width: 260px; }
.right .pbar { gap: 8px; height: 26px; }
.sheets .find { height: 19px; }
.sheets { flex: 550 1 0; }
.layers { flex: 306 1 0; }
.s1 { width: 121px; }
.hot { background: #7db8f7; color: #fff; font-weight: 700; }
.sheets th:last-child { padding-right: 56px; }
.sheets td { padding: 0 2px; }
.sheets .on td { background: #d5e8f8; }
.sheets .on td:first-child { outline: 3px solid #747c84; outline-offset: -2px; }
.twig { display: inline-block; width: 16px; height: 1px; margin: 0 7px 4px 6px; background: #ddd; }
.scroll { display: flex; align-items: center; gap: 6px; margin-top: auto; padding: 3px 5px; height: 9px; }
.scroll span { height: 8px; border-radius: 4px; background: #c6c6c6; }
.long { width: 165px; } .half { width: 82px; }
.arrow { display: inline-block; width: 4px; height: 7px; background: #555; clip-path: polygon(100% 0, 100% 100%, 0 50%); }
.flip { transform: scaleX(-1); margin-left: 6px; }
.only { display: flex; flex: none; align-items: center; gap: 4px; height: 20px; padding-left: 1px; }
.ltabs { display: flex; flex: none; height: 23px; border-bottom: 1px solid #ddd; background: #f0f0f0; }
.ltabs button { padding: 0 8px; border: 1px solid #c8c8c8; background: #dedede; color: #888; }
.ltabs .on { border: 0; background: #f3f3f3; color: #333; font-weight: 700; }
.k1 { width: 50px; } .k2 { width: 36px; }
.layers tbody td { height: 25px; }
.status { display: flex; flex: none; align-items: center; height: 32px; white-space: nowrap; }
.status span { flex: none; }
.s0 { width: 169px; text-indent: 1px; } .s2 { width: 83px; } .s3 { width: 103px; } .s4 { width: 103px; } .s5 { width: 103px; }
.status button { flex: none; justify-content: center; box-sizing: border-box; height: 25px; border: 1px solid #aaa; border-radius: 2px; background: #fff; }
.status button.on { background: #d6e7f8; border-color: #7f96ad; }
.status .sub { width: 73px; border-color: #888; }
.status select { width: 100px; height: 25px; margin: 0 2px 0 4px; border-color: #bbb; }
.mark { position: absolute; inset: 0; width: 100%; height: 100%; stroke: none; opacity: .15; pointer-events: none; }
.mark text { fill: #128dbb; }
.wlat { font: 700 284px "Open Sans", sans-serif; }
.wcjk { font: 900 244px "Noto Sans CJK SC", sans-serif; }
</style>
